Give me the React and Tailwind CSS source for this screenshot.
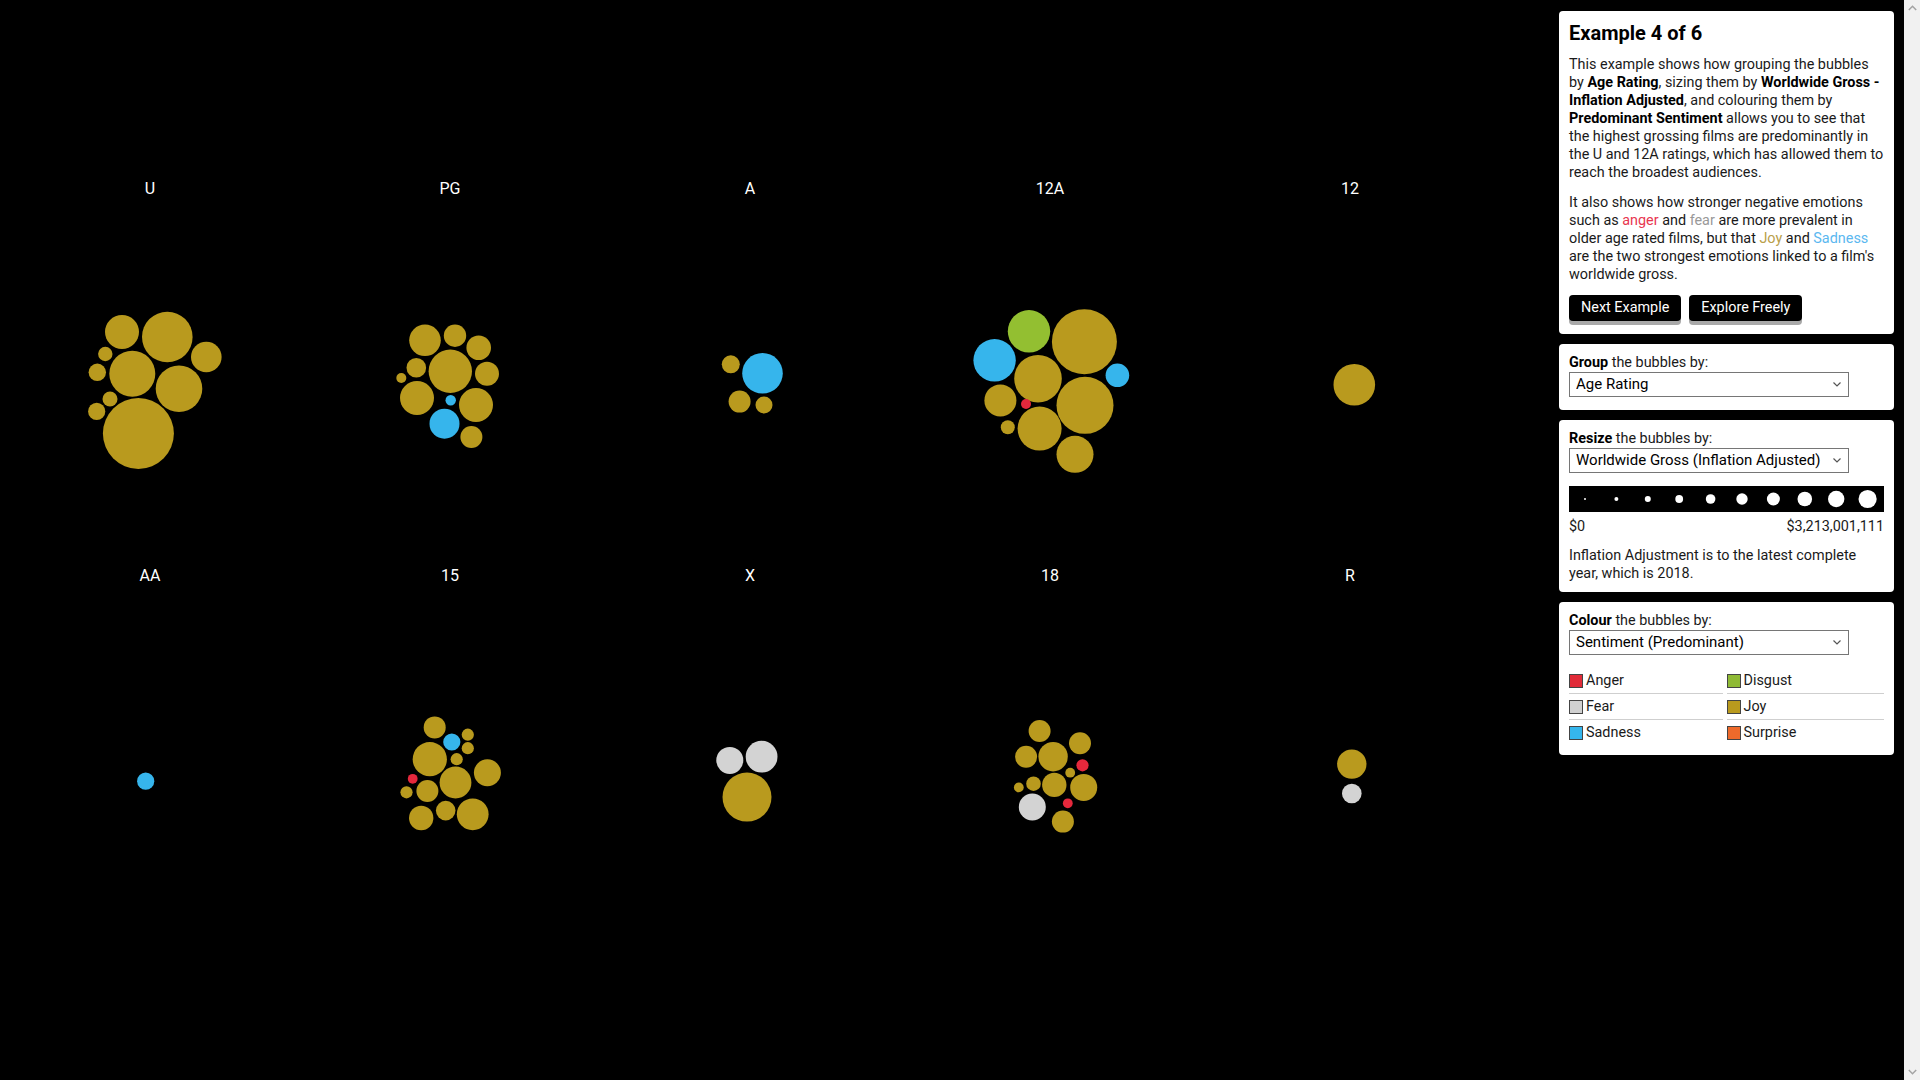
import React from "react";

const G = "#b99a1e";
const B = "#36b5ec";
const GR = "#93bf31";
const R = "#e5283c";
const Y = "#d3d3d3";

const cells = [
  {
    label: "U",
    col: 0,
    row: 0,
    c: [
      [167.3, 337, 25.3, G],
      [122, 332, 17, G],
      [206.3, 357, 15.3, G],
      [105.3, 354, 7.2, G],
      [132.3, 373.7, 23, G],
      [97.3, 372.3, 8.7, G],
      [179, 388.7, 23.3, G],
      [110, 399, 7.5, G],
      [96.7, 411.4, 8.6, G],
      [138.4, 433.5, 35.5, G],
    ],
  },
  {
    label: "PG",
    col: 1,
    row: 0,
    c: [
      [425, 340.3, 15.8, G],
      [455, 335.7, 11.2, G],
      [478.7, 347.7, 12.3, G],
      [416.3, 367.7, 9.8, G],
      [401.3, 378, 5, G],
      [450.3, 371.3, 21.7, G],
      [487, 373.7, 12, G],
      [417, 398, 17, G],
      [450.7, 400.3, 5.2, B],
      [476, 405, 17, G],
      [444.5, 423.7, 15, B],
      [471.4, 437, 11, G],
    ],
  },
  {
    label: "A",
    col: 2,
    row: 0,
    c: [
      [730.8, 364.3, 9, G],
      [762.5, 373.3, 20.3, B],
      [739.6, 401.6, 11, G],
      [764, 405, 8.5, G],
    ],
  },
  {
    label: "12A",
    col: 3,
    row: 0,
    c: [
      [1029, 331.3, 21.2, GR],
      [1084.4, 341.7, 32.5, G],
      [994.6, 360.3, 21.2, B],
      [1117.4, 375.3, 11.8, B],
      [1038, 378.7, 23.8, G],
      [1000.4, 400.4, 16, G],
      [1026, 404, 5, R],
      [1085, 405.3, 28.5, G],
      [1007.8, 427.3, 7, G],
      [1039.6, 428.6, 22, G],
      [1075, 454.3, 18.5, G],
    ],
  },
  {
    label: "12",
    col: 4,
    row: 0,
    c: [[1354.3, 384.7, 20.8, G]],
  },
  {
    label: "AA",
    col: 0,
    row: 1,
    c: [[145.7, 781.2, 8.6, B]],
  },
  {
    label: "15",
    col: 1,
    row: 1,
    c: [
      [434.7, 727.4, 11, G],
      [467.8, 734.7, 6.1, G],
      [451.8, 742, 8.6, B],
      [467.8, 748.2, 6.1, G],
      [429.8, 759.2, 17.1, G],
      [456.7, 759.2, 6.1, G],
      [487.4, 772.7, 13.5, G],
      [412.7, 778.8, 4.9, R],
      [455.5, 782.5, 15.9, G],
      [406.5, 792.3, 6.1, G],
      [427.4, 791, 11, G],
      [445.7, 810.6, 9.8, G],
      [472.7, 814.3, 15.9, G],
      [421.2, 818, 12.2, G],
    ],
  },
  {
    label: "X",
    col: 2,
    row: 1,
    c: [
      [729.8, 760.4, 13.5, Y],
      [761.6, 756.7, 15.9, Y],
      [747, 797.1, 24.5, G],
    ],
  },
  {
    label: "18",
    col: 3,
    row: 1,
    c: [
      [1039.6, 731, 11, G],
      [1080, 743.3, 11, G],
      [1026.1, 756.7, 11, G],
      [1053.1, 756.7, 14.7, G],
      [1082.5, 765.3, 6.1, R],
      [1070.2, 772.7, 4.9, G],
      [1033.5, 783.7, 7.3, G],
      [1018.8, 787.4, 4.9, G],
      [1054.3, 784.9, 12.2, G],
      [1083.7, 787.4, 13.5, G],
      [1067.8, 803.3, 4.9, R],
      [1032.3, 807, 13.5, Y],
      [1062.9, 821.6, 11, G],
    ],
  },
  {
    label: "R",
    col: 4,
    row: 1,
    c: [
      [1351.8, 764.1, 14.7, G],
      [1351.8, 793.5, 9.8, Y],
    ],
  },
];

function Cell({ label, col, row, c }) {
  const y0 = row === 0 ? 198 : 585;
  return (
    <div className="flex flex-col items-center">
      <div className="h-[18px] leading-[18px] text-[16px] text-white">{label}</div>
      <svg
        className="block"
        width="300"
        height="369"
        viewBox={`${col * 300} ${y0} 300 369`}
      >
        {c.map(([x, y, r, f], i) => (
          <circle key={i} cx={x} cy={y} r={r} fill={f} />
        ))}
      </svg>
    </div>
  );
}

function Chevron() {
  return (
    <svg
      className="pointer-events-none absolute right-[8px] top-[10px]"
      width="8"
      height="5"
      viewBox="0 0 8 5"
    >
      <path d="M0.5 0.5 L4 4 L7.5 0.5" fill="none" stroke="#555" strokeWidth="1.2" />
    </svg>
  );
}

function Select({ value }) {
  return (
    <div className="relative w-[280px] h-[25px]">
      <select
        defaultValue={value}
        className="appearance-none w-full h-full border border-[#767676] bg-white pl-[6px] text-[15px] leading-[23px] text-black font-[Roboto,sans-serif] outline-none"
      >
        <option>{value}</option>
      </select>
      <Chevron />
    </div>
  );
}

const sizes = [1, 2, 3, 3.9, 4.8, 5.7, 6.5, 7.3, 8.2, 9.1];

const legend = [
  ["Anger", "#e12b38"],
  ["Disgust", "#8fba35"],
  ["Fear", "#d0d0d0"],
  ["Joy", "#b99a1e"],
  ["Sadness", "#35b6ec"],
  ["Surprise", "#ee6a2b"],
];

export default function App() {
  return (
    <div className="flex w-[1920px] h-[1080px] overflow-hidden bg-black font-[Roboto,sans-serif]">
      <div className="w-[1559px] shrink-0 pt-[180px]">
        <div className="grid grid-cols-[repeat(5,300px)]">
          {cells.map((cell) => (
            <Cell key={cell.label} {...cell} />
          ))}
        </div>
      </div>

      <div className="w-[335px] shrink-0 pt-[11px] flex flex-col gap-[10px]">
        <div className="bg-white rounded-[4px] px-[10px] pt-[10px] pb-[9px] text-[14.4px] leading-[18px] text-[#1a1a1a]">
          <h1 className="text-[20px] leading-[24px] font-bold text-black">Example 4 of 6</h1>
          <p className="mt-[11px]">
            This example shows how grouping the bubbles by <b className="text-black">Age Rating</b>, sizing them by{" "}
            <b className="text-black">Worldwide Gross - Inflation Adjusted</b>, and colouring them by{" "}
            <b className="text-black">Predominant Sentiment</b> allows you to see that the highest grossing films are
            predominantly in the U and 12A ratings, which has allowed them to reach the broadest
            audiences.
          </p>
          <p className="mt-[12px]">
            It also shows how stronger negative emotions such as{" "}
            <span className="text-[#e8364f]">anger</span> and{" "}
            <span className="text-[#999999]">fear</span> are more prevalent in older age rated
            films, but that <span className="text-[#b9a04a]">Joy</span> and{" "}
            <span className="text-[#5bb8f0]">Sadness</span> are the two strongest emotions linked
            to a film's worldwide gross.
          </p>
          <div className="mt-[11px] mb-[4px] flex gap-[8px]">
            <button className="h-[26px] px-[12px] rounded-[4px] bg-black text-white text-[14.4px] shadow-[0_4px_0_#a9a9a9]">
              Next Example
            </button>
            <button className="h-[26px] px-[12px] rounded-[4px] bg-black text-white text-[14.4px] shadow-[0_4px_0_#a9a9a9]">
              Explore Freely
            </button>
          </div>
        </div>

        <div className="bg-white rounded-[4px] px-[10px] pt-[10px] pb-[13px] text-[14.4px] leading-[18px] text-[#1a1a1a]">
          <div>
            <b className="text-black">Group</b> the bubbles by:
          </div>
          <Select value="Age Rating" />
        </div>

        <div className="bg-white rounded-[4px] px-[10px] pt-[10px] pb-[9px] text-[14.4px] leading-[18px] text-[#1a1a1a]">
          <div>
            <b className="text-black">Resize</b> the bubbles by:
          </div>
          <Select value="Worldwide Gross (Inflation Adjusted)" />
          <div className="mt-[13px] h-[26px] bg-black">
            <svg className="block" width="315" height="26" viewBox="0 0 315 26">
              {sizes.map((r, i) => (
                <circle key={i} cx={16 + 31.4 * i} cy={13} r={r} fill="#fff" />
              ))}
            </svg>
          </div>
          <div className="mt-[6px] flex justify-between">
            <span>$0</span>
            <span>$3,213,001,111</span>
          </div>
          <p className="mt-[11px]">
            Inflation Adjustment is to the latest complete year, which is 2018.
          </p>
        </div>

        <div className="bg-white rounded-[4px] px-[10px] pt-[10px] pb-[9px] text-[14.4px] leading-[18px] text-[#1a1a1a]">
          <div>
            <b className="text-black">Colour</b> the bubbles by:
          </div>
          <Select value="Sentiment (Predominant)" />
          <div className="mt-[13px] grid grid-cols-2">
            {legend.map(([name, color], i) => (
              <div
                key={name}
                className={`h-[26px] flex items-center gap-[3px] ${
                  i < 4 ? "border-b border-[#cfcfcf]" : ""
                } ${i % 2 === 0 ? "mr-[4px]" : ""}`}
              >
                <span
                  className="w-[14px] h-[14px] border border-[#444]"
                  style={{ backgroundColor: color }}
                />
                <span>{name}</span>
              </div>
            ))}
          </div>
        </div>
      </div>

      <div className="w-[10px] shrink-0" />

      <div className="w-[16px] shrink-0 bg-[#f1f1f1] flex flex-col justify-between items-center py-[5px]">
        <svg width="9" height="6" viewBox="0 0 9 6">
          <path d="M0.8 5 L4.5 1.3 L8.2 5" fill="none" stroke="#a3a3a3" strokeWidth="1.5" />
        </svg>
        <svg width="9" height="6" viewBox="0 0 9 6">
          <path d="M0.8 1 L4.5 4.7 L8.2 1" fill="none" stroke="#a3a3a3" strokeWidth="1.5" />
        </svg>
      </div>
    </div>
  );
}
